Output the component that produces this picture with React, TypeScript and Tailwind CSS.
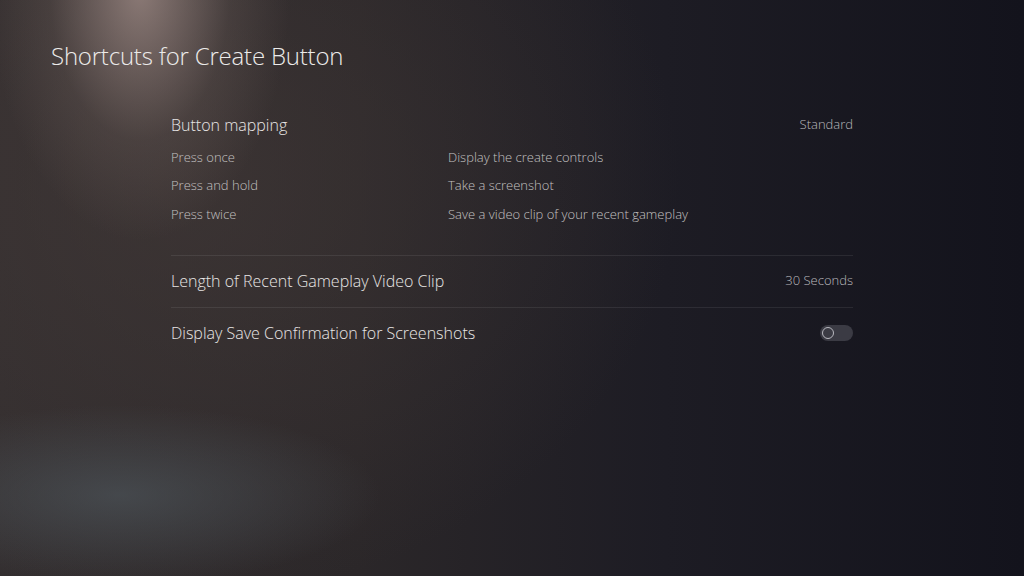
import React from 'react';

const mappings = [
  { press: 'Press once', action: 'Display the create controls' },
  { press: 'Press and hold', action: 'Take a screenshot' },
  { press: 'Press twice', action: 'Save a video clip of your recent gameplay' },
];

const Toggle: React.FC<{ on?: boolean }> = ({ on = false }) => (
  <div className="flex h-[16px] w-[33px] items-center rounded-full bg-[#3b3b44] px-[2px]">
    <span
      className={`h-[12px] w-[12px] rounded-full border-[1.5px] border-[#b9b9c0] ${on ? 'ml-auto bg-white' : ''}`}
    />
  </div>
);

export default function App() {
  return (
    <div
      className="h-[576px] w-[1024px] overflow-hidden font-light text-[#e6e4e3] bg-[radial-gradient(ellipse_150px_250px_at_140px_-10px,rgba(160,140,135,0.8),rgba(120,105,100,0.25)_60%,transparent),radial-gradient(ellipse_260px_90px_at_120px_495px,rgba(78,86,92,0.65),transparent),radial-gradient(ellipse_500px_420px_at_180px_180px,rgba(70,60,58,0.55),transparent),linear-gradient(90deg,#332e2f_0%,#2b2729_35%,#1d1c24_65%,#13131c_100%)]"
      style={{ fontFamily: '"Open Sans", "Noto Sans", sans-serif' }}
    >
      <h1 className="pl-[51px] pt-[39px] text-[24px] font-light leading-[34px] tracking-[-0.2px] text-[#ecebea]">
        Shortcuts for Create Button
      </h1>

      <div className="ml-[171px] mt-[39px] w-[682px]">
        <section className="pb-[26px]">
          <div className="flex items-center justify-between">
            <span className="text-[16px] leading-[26px] text-[#e8e6e5]">Button mapping</span>
            <span className="text-[13px] text-[#b9b8bd]">Standard</span>
          </div>
          <div className="mt-[5px] flex flex-col">
            {mappings.map((m) => (
              <div key={m.press} className="flex h-[28.5px] items-center text-[13px] text-[#c2c0c0]">
                <span className="w-[277px]">{m.press}</span>
                <span>{m.action}</span>
              </div>
            ))}
          </div>
        </section>

        <div className="flex h-[52px] items-center justify-between border-t border-[#ffffff14]">
          <span className="text-[16px] text-[#e8e6e5]">Length of Recent Gameplay Video Clip</span>
          <span className="text-[13px] text-[#b9b8bd]">30 Seconds</span>
        </div>

        <div className="flex h-[52px] items-center justify-between border-t border-[#ffffff14]">
          <span className="text-[16px] text-[#e8e6e5]">Display Save Confirmation for Screenshots</span>
          <Toggle />
        </div>
      </div>
    </div>
  );
}
